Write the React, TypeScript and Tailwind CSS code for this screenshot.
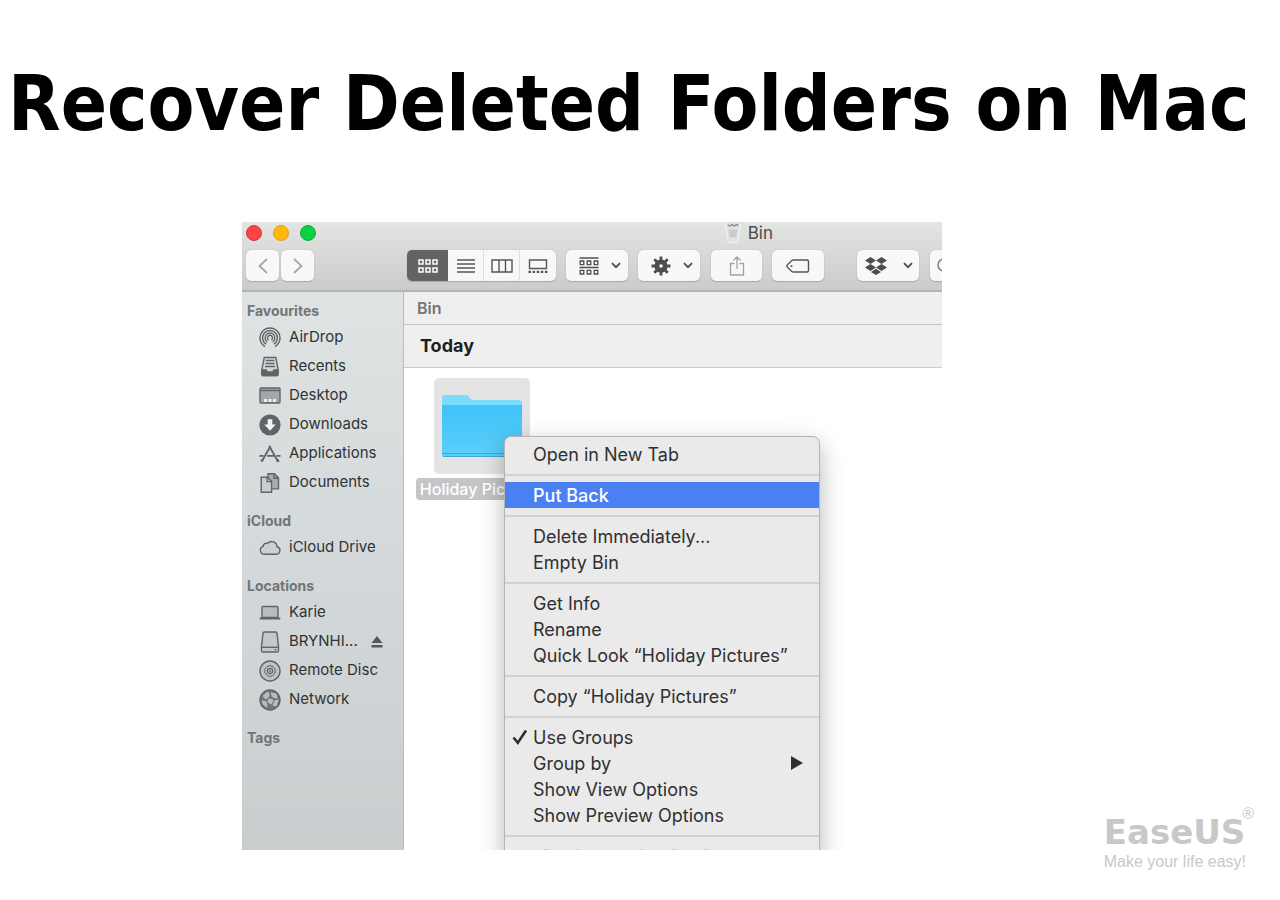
import React from "react";

const SidebarIcon = ({ name }: { name: string }) => {
  const common = {
    viewBox: "0 0 22 22",
    className: "h-[22px] w-[22px] shrink-0",
    fill: "none",
    stroke: "#616466",
    strokeWidth: 1.4,
  };

  switch (name) {
    case "AirDrop":
      return (
        <svg {...common}>
          <path d="M6 19.6a10 10 0 1 1 10 0" />
          <path d="M7.2 17.2a7.4 7.4 0 1 1 7.6 0" />
          <path d="M8.4 15a4.9 4.9 0 1 1 5.2 0" />
          <path d="M9.8 13a2.5 2.5 0 1 1 2.4 0" />
        </svg>
      );
    case "Recents":
      return (
        <svg {...common}>
          <path d="M5.2 1.5h11.6L19 13v5.500a1 1 0 0 1-1 1H4a1 1 0 0 1-1-1V13z" fill="#d3d7d8" />
          <path d="M3 14h4.200l1 2h5.600l1-2H19v4.500a1 1 0 0 1-1 1H4a1 1 0 0 1-1-1z" fill="#616466" />
          <path d="M6.800 4.500h8.400M6.400 7.500h9.200M6 10.500h10" />
        </svg>
      );
    case "Desktop":
      return (
        <svg {...common}>
          <rect x="1" y="3" width="20" height="15" rx="1.2" fill="#a3a7a9" />
          <path d="M1 5.5h20" />
          <path d="M5 15.5h12" stroke="#eef0f0" strokeWidth="3" strokeDasharray="3 1.5" />
        </svg>
      );
    case "Downloads":
      return (
        <svg {...common}>
          <circle cx="11" cy="11" r="10.6" fill="#616466" stroke="none" />
          <path d="M8.7 5.2h4.6v5.3h3.4L11 16.8l-5.7-6.3h3.4z" fill="#f2f4f4" stroke="none" />
        </svg>
      );
    case "Applications":
      return (
        <svg {...common} strokeWidth={1.8}>
          <path d="M11.6 3 3.6 17M10.2 3l8.2 14.500" />
          <path d="M.5 12.800h4M8 12.800h7M17.500 12.800h4" />
          <path d="m3.400 16.500-.8 2.200M18 16.300l1.600 2.600" strokeWidth="2.400" />
        </svg>
      );
    case "Documents":
      return (
        <svg {...common}>
          <path d="M9 1.7h6.3l4.2 4.2v11H9z" fill="#a9adaf" />
          <path d="M15 1.7v4.5h4.5" />
          <path d="M2.2 5.2h6.2l4.2 4.2v10.9H2.2z" fill="#c9cdcf" />
          <path d="M8.2 5.2v4.4h4.4" />
        </svg>
      );
    case "iCloud Drive":
      return (
        <svg {...common}>
          <path
            d="M5.2 17.2a4 4 0 0 1-1-7.8 3.2 3.2 0 0 1 4.5-3 5.2 5.2 0 0 1 9.2 3.3 3.8 3.8 0 0 1-.3 7.5z"
            fill="#cbd0d1"
          />
        </svg>
      );
    case "Karie":
      return (
        <svg {...common}>
          <rect x="3" y="4.5" width="16" height="11" rx="1" fill="#b7bcbe" />
          <path d="M.7 16.5h20.6" strokeWidth="2" />
        </svg>
      );
    case "BRYNHI...":
      return (
        <svg {...common}>
          <path
            d="M5.5 1h11A1.5 1.5 0 0 1 18 2.3l1.5 13.2v4A1.5 1.5 0 0 1 18 21H4a1.5 1.5 0 0 1-1.500-1.500v-4L4 2.300A1.500 1.500 0 0 1 5.500 1z"
            fill="#c4c8ca"
          />
          <path d="M2.6 16.3h16.8" />
          <path d="M15.5 18.6h1.8" />
        </svg>
      );
    case "Remote Disc":
      return (
        <svg {...common}>
          <circle cx="11" cy="11" r="10" fill="#bfc3c5" />
          <circle cx="11" cy="11" r="5.3" strokeWidth="1" />
          <circle cx="11" cy="11" r="2.6" strokeWidth="1.2" />
          <circle cx="11" cy="11" r=".8" strokeWidth=".8" />
        </svg>
      );
    case "Network":
      return (
        <svg {...common}>
          <circle cx="11" cy="11" r="10" fill="#74787a" />
          <path
            d="M4 7l5-4 1 4-3 3zM12 4l5 1 1 4-4-1zM3 12l4 1 1 5-3-2zM10 10l4 1-2 4-3-2zM16 12l3-1-2 6-3-1z"
            fill="#b4b8ba"
            stroke="#d6dadb"
            strokeWidth=".7"
          />
        </svg>
      );
    default:
      return null;
  }
};

const Chevron = () => (
  <svg viewBox="0 0 10 7" className="h-[7px] w-[10px]" fill="none" stroke="#4d4d4d" strokeWidth="1.8">
    <path d="m1 1.2 4 4 4-4" />
  </svg>
);

const sections = [
  {
    title: "Favourites",
    items: ["AirDrop", "Recents", "Desktop", "Downloads", "Applications", "Documents"],
  },
  { title: "iCloud", items: ["iCloud Drive"] },
  { title: "Locations", items: ["Karie", "BRYNHI...", "Remote Disc", "Network"] },
  { title: "Tags", items: [] },
];

const menuGroups = [
  ["Open in New Tab"],
  ["Put Back"],
  ["Delete Immediately...", "Empty Bin"],
  ["Get Info", "Rename", "Quick Look “Holiday Pictures”"],
  ["Copy “Holiday Pictures”"],
  ["Use Groups", "Group by", "Show View Options", "Show Preview Options"],
];

const tagColors = ["bg-[#f7b5b0]", "bg-[#f8cfa5]", "bg-[#f8e7a0]", "bg-[#bfe8bd]", "bg-[#b5cffa]", "bg-[#e3bff0]"];

const toolButton =
  "flex h-[31px] shrink-0 items-center justify-center rounded-[5px] bg-[#f8f8f8] shadow-[0_0_1px_#999,0_1px_1px_#aaa]";

const Toolbar = () => (
  <div className="flex items-center pl-1">
    <div className="flex gap-0.5">
      <button type="button" aria-label="Back" className={`${toolButton} w-[33px]`}>
        <svg viewBox="0 0 10 16" className="h-4 w-[10px]" fill="none" stroke="#a6a6a6" strokeWidth="1.8">
          <path d="M9 1 1.5 8 9 15" />
        </svg>
      </button>
      <button type="button" aria-label="Forward" className={`${toolButton} w-[33px]`}>
        <svg viewBox="0 0 10 16" className="h-4 w-[10px]" fill="none" stroke="#a6a6a6" strokeWidth="1.8">
          <path d="M1 1 8.5 8 1 15" />
        </svg>
      </button>
    </div>

    <div className="ml-[93px] flex h-[31px] shrink-0 overflow-hidden rounded-[5px] bg-[#f8f8f8] shadow-[0_0_1px_#999,0_1px_1px_#aaa]">
      <button type="button" aria-label="Icons" className="flex w-[41px] items-center justify-center bg-[#636363]">
        <svg viewBox="0 0 20 14" className="h-[14px] w-5" fill="none" stroke="#fff" strokeWidth="1.5">
          <path d="M1 1h4v4H1zM8 1h4v4H8zM15 1h4v4h-4zM1 9h4v4H1zM8 9h4v4H8zM15 9h4v4h-4z" />
        </svg>
      </button>
      <button type="button" aria-label="List" className="flex w-[36px] items-center justify-center border-r border-[#dedede]">
        <svg viewBox="0 0 20 14" className="h-[14px] w-5" fill="none" stroke="#555" strokeWidth="1.3">
          <path d="M1 1h18M1 5h18M1 9h18M1 13h18" />
        </svg>
      </button>
      <button type="button" aria-label="Columns" className="flex w-[36px] items-center justify-center border-r border-[#dedede]">
        <svg viewBox="0 0 22 14" className="h-[14px] w-[22px]" fill="none" stroke="#555" strokeWidth="1.4">
          <path d="M1 1h20v12H1zM8 1v12M14.5 1v12" />
        </svg>
      </button>
      <button type="button" aria-label="Gallery" className="flex w-[36px] items-center justify-center">
        <svg viewBox="0 0 20 14" className="h-[14px] w-5" fill="none" stroke="#555" strokeWidth="1.4">
          <path d="M1.5 1h17v8.5h-17z" />
          <path d="M.5 12.8h19" strokeWidth="2.2" strokeDasharray="2.5 1.6" />
        </svg>
      </button>
    </div>

    <button type="button" aria-label="Group items" className={`${toolButton} ml-[10px] w-[62px] gap-3 pl-1.5`}>
      <svg viewBox="0 0 20 18" className="h-[18px] w-5" fill="none" stroke="#4d4d4d" strokeWidth="1.3">
        <path d="M.5 1h19M.5 10.5h19" />
        <path d="M1.2 4h3.6v3.6H1.2zM8.2 4h3.6v3.6H8.2zM15.2 4h3.6v3.6h-3.6zM1.2 13.4h3.6V17H1.2zM8.2 13.4h3.6V17H8.2zM15.2 13.4h3.6V17h-3.6z" />
      </svg>
      <Chevron />
    </button>

    <button type="button" aria-label="Actions" className={`${toolButton} ml-[10px] w-[62px] gap-3 pl-1.5`}>
      <svg viewBox="0 0 20 20" className="h-5 w-5" fill="none" stroke="#4d4d4d">
        <circle cx="10" cy="10" r="4.2" strokeWidth="4.8" />
        <path
          d="M10 .5v4M10 15.5v4M.5 10h4M15.5 10h4M3.3 3.3l2.8 2.8M13.9 13.9l2.8 2.8M3.3 16.7l2.8-2.8M13.9 6.1l2.8-2.8"
          strokeWidth="2.8"
        />
      </svg>
      <Chevron />
    </button>

    <button type="button" aria-label="Share" className={`${toolButton} ml-[11px] w-[51px]`}>
      <svg viewBox="0 0 16 20" className="h-5 w-4" fill="none" stroke="#a3a3a3" strokeWidth="1.3">
        <path d="M5.5 7.5h-4V19h13V7.5h-4M8 13V1M4.5 4.5 8 1l3.5 3.5" />
      </svg>
    </button>

    <button type="button" aria-label="Tags" className={`${toolButton} ml-[10px] w-[52px]`}>
      <svg viewBox="0 0 24 14" className="h-[14px] w-6" fill="none" stroke="#555" strokeWidth="1.4">
        <path d="M7.5 1H21a1.5 1.5 0 0 1 1.5 1.5v9A1.5 1.5 0 0 1 21 13H7.5a3 3 0 0 1-2-.8l-4-4a1.6 1.6 0 0 1 0-2.4l4-4a3 3 0 0 1 2-.8z" />
        <circle cx="5.5" cy="7" r="1" fill="#555" stroke="none" />
      </svg>
    </button>

    <button type="button" aria-label="Dropbox" className={`${toolButton} ml-[33px] w-[62px] gap-4 pl-px`}>
      <svg viewBox="0 0 22 18" className="h-[18px] w-[22px]" fill="#4d4d4d">
        <path d="M5.5 0 11 3.5 5.5 7 0 3.5zM16.5 0 22 3.5 16.5 7 11 3.5zM5.5 7 11 10.5 5.5 14 0 10.5zM16.5 7l5.5 3.5-5.5 3.5-5.5-3.5zM11 11.8l5 3.1-5 3.1-5-3.1z" />
      </svg>
      <Chevron />
    </button>

    <button type="button" aria-label="Search" className={`${toolButton} ml-[11px] w-[62px]`}>
      <svg viewBox="0 0 50 16" className="h-4 w-[50px]" fill="none" stroke="#777" strokeWidth="1.4">
        <circle cx="8" cy="7" r="6" />
        <path d="m12.5 11.5 4 4" />
      </svg>
    </button>
  </div>
);

const Sidebar = () => (
  <nav className="flex w-[162px] shrink-0 flex-col gap-3 border-r border-[#b9bcbd] bg-linear-to-b from-[#dfe3e3] via-[#d3d8da] to-[#c9cdce] pt-[7px]">
    {sections.map((section) => (
      <section key={section.title}>
        <h2 className="pl-[5px] text-[14px] leading-[24px] font-bold text-[#717577]">{section.title}</h2>
        <ul>
          {section.items.map((item) => (
            <li key={item} className="flex h-[29px] items-center pl-[17px]">
              <a href="#" className="flex items-center gap-2 text-[15px] whitespace-nowrap text-[#303334]">
                <SidebarIcon name={item} />
                {item}
              </a>
              {item === "BRYNHI..." && (
                <button type="button" aria-label="Eject" className="ml-[13px]">
                  <svg viewBox="0 0 12 12" className="h-3 w-3" fill="#55585a">
                    <path d="M6 0l5.5 7H.5zM.5 9h11v2.5H.5z" />
                  </svg>
                </button>
              )}
            </li>
          ))}
        </ul>
      </section>
    ))}
  </nav>
);

const ContextMenu = () => (
  <div
    role="menu"
    className="absolute top-[68px] left-[100px] w-[316px] rounded-[7px] border border-[#b4b4b4] bg-[#eaeaea] pt-1 shadow-[0_8px_24px_rgba(0,0,0,0.28)]"
  >
    {menuGroups.map((group) => (
      <div key={group[0]}>
        {group.map((label) => (
          <button
            key={label}
            type="button"
            role="menuitem"
            className={`flex h-[26px] w-full items-center pr-4 pl-[7px] text-[18px] whitespace-nowrap ${
              label === "Put Back" ? "bg-[#4b80f3] font-medium text-white" : "text-[#303030]"
            }`}
          >
            <span className="w-[21px] shrink-0">
              {label === "Use Groups" && (
                <svg viewBox="0 0 16 16" className="h-4 w-4" fill="none" stroke="#303030" strokeWidth="2.6">
                  <path d="m1.5 8.5 4.3 5.3L14 1.5" />
                </svg>
              )}
            </span>
            {label}
            {label === "Group by" && (
              <svg viewBox="0 0 12 14" className="ml-auto h-[14px] w-3" fill="#303030">
                <path d="M0 0l12 7-12 7z" />
              </svg>
            )}
          </button>
        ))}
        <hr className="mt-[7px] mb-[6px] border-t-2 border-[#d2d2d2]" />
      </div>
    ))}
    <div className="flex gap-[14px] pt-1.5 pb-3 pl-8">
      {tagColors.map((color) => (
        <span key={color} className={`h-[18px] w-[18px] rounded-full ${color}`} />
      ))}
    </div>
  </div>
);

const FinderWindow = () => (
  <div className="mb-[22px] ml-[242px] flex h-[628px] w-[700px] shrink-0 flex-col overflow-hidden font-[Inter,sans-serif]">
    <header className="h-[70px] shrink-0 border-b-2 border-[#b4b4b4] bg-linear-to-b from-[#e3e5e3] to-[#cbcbcb]">
      <div className="mb-1.5 flex h-[22px] items-center pl-1">
        <div className="flex gap-[11px]">
          <button type="button" aria-label="Close" className="h-4 w-4 rounded-full border border-[#d9343a] bg-[#fc4348]" />
          <button type="button" aria-label="Minimise" className="h-4 w-4 rounded-full border border-[#dda10f] bg-[#fdb80a]" />
          <button type="button" aria-label="Zoom" className="h-4 w-4 rounded-full border border-[#0cae37] bg-[#09d146]" />
        </div>
        <div className="mr-[169px] ml-auto flex items-center gap-1.5 text-[17px] leading-[22px] text-[#4b4b4b]">
          <svg viewBox="0 0 18 20" className="h-5 w-[18px]" fill="none">
            <path d="M1.5 2h15l-2.3 16a2 2 0 0 1-2 1.5H5.8a2 2 0 0 1-2-1.5z" fill="#e2e4e2" stroke="#f4f5f4" />
            <path d="M4.5 6.500h9l-1.200 8H5.700z" fill="#c9cccb" />
            <path d="M3.500 2 6 3l2-1.500L10 3l2.500-1.500 2 1" stroke="#8b8f8f" strokeWidth="1.5" />
          </svg>
          Bin
        </div>
      </div>
      <Toolbar />
    </header>

    <div className="flex min-h-0 grow">
      <Sidebar />
      <main className="flex min-w-0 grow flex-col bg-white">
        <p className="border-b border-[#c6c6c6] bg-[#efefef] pl-[13px] text-[16px] leading-[32px] font-semibold text-[#757575]">
          Bin
        </p>
        <h2 className="border-b border-[#cccccc] bg-[#efefef] pl-4 text-[18px] leading-[42px] font-bold text-[#1f1f1f]">
          Today
        </h2>
        <div className="relative grow pt-[10px] pl-3">
          <div className="flex w-[132px] flex-col items-center gap-1">
            <div className="flex h-24 w-24 items-center justify-center rounded-[5px] bg-[#e4e4e4]">
              <svg viewBox="0 0 82 66" className="h-[66px] w-[82px]">
                <defs>
                  <linearGradient id="folder" x1="0" y1="0" x2="0" y2="1">
                    <stop offset="0" stopColor="#3fc3f8" />
                    <stop offset="1" stopColor="#5bcffb" />
                  </linearGradient>
                </defs>
                <path d="M1 5a3 3 0 0 1 3-3h21c3 0 4 5 7 5h46a3 3 0 0 1 3 3v10H1z" fill="#7cdcfc" />
                <path d="M1 12h80v49a3 3 0 0 1-3 3H4a3 3 0 0 1-3-3z" fill="url(#folder)" />
                <path d="M1 60.5h80M2 63.5h78" stroke="#3ea9d8" />
              </svg>
            </div>
            <span className="rounded-[4px] bg-[#c5c5c5] px-1 text-[16px] leading-[22px] font-medium whitespace-nowrap text-white">
              Holiday Pictures
            </span>
          </div>
          <ContextMenu />
        </div>
      </main>
    </div>
  </div>
);

const App = () => {
  return (
    <div className="min-h-screen bg-white pt-[52px]">
      <h1 className="px-2 font-['DejaVu_Sans_Condensed','DejaVu_Sans',sans-serif] text-[76px] leading-[104px] font-bold text-black">
        Recover Deleted Folders on Mac
      </h1>
      <div className="mt-[66px] flex items-end justify-between">
        <FinderWindow />
        <div className="relative mr-[34px] text-[#c8c8c8]">
          <p className="font-['DejaVu_Sans',sans-serif] text-[34px] leading-[40px] font-bold">EaseUS</p>
          <p className="font-['Liberation_Sans',sans-serif] text-[16px] leading-[20px] whitespace-nowrap">
            Make your life easy!
          </p>
          <span className="absolute -top-2 -right-2 font-['Liberation_Sans',sans-serif] text-[16px] leading-[20px]">®</span>
        </div>
      </div>
    </div>
  );
};

export default App;
